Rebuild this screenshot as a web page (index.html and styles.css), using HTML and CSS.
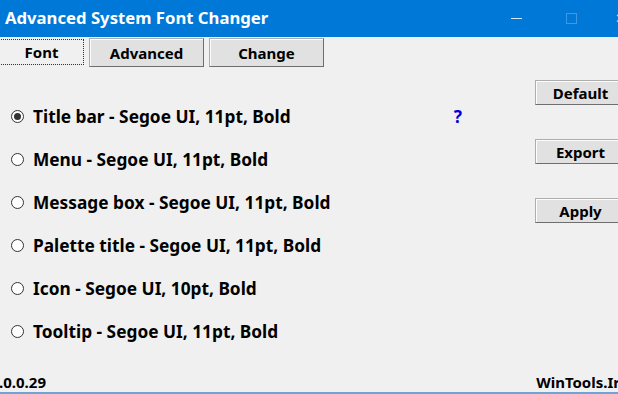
FILE: index.html
```html
<!DOCTYPE html>
<html>
<head>
  <title>Advanced System Font Changer</title>
  <link rel="stylesheet" href="styles.css">
</head>
<body>
  <div class="window">
    <div class="titlebar">
      <div class="title">Advanced System Font Changer</div>
      <div class="controls">
        <span class="ctl min"></span>
        <span class="ctl max"></span>
        <span class="ctl close">✕</span>
      </div>
    </div>

    <div class="tabs">
      <button class="tab active">Font</button>
      <button class="tab">Advanced</button>
      <button class="tab">Change</button>
    </div>

    <div class="content">
      <div class="options">
        <label class="option"><input type="radio" name="font" checked><span>Title bar - Segoe UI, 11pt, Bold</span><span class="help">?</span></label>
        <label class="option"><input type="radio" name="font"><span>Menu - Segoe UI, 11pt, Bold</span></label>
        <label class="option"><input type="radio" name="font"><span>Message box - Segoe UI, 11pt, Bold</span></label>
        <label class="option"><input type="radio" name="font"><span>Palette title - Segoe UI, 11pt, Bold</span></label>
        <label class="option"><input type="radio" name="font"><span>Icon - Segoe UI, 10pt, Bold</span></label>
        <label class="option"><input type="radio" name="font"><span>Tooltip - Segoe UI, 11pt, Bold</span></label>
      </div>
      <div class="actions">
        <button class="btn">Default</button>
        <button class="btn">Export</button>
        <button class="btn">Apply</button>
      </div>
    </div>

    <div class="footer">
      <span>.0.0.29</span>
      <span>WinTools.Ir</span>
    </div>
  </div>
</body>
</html>
```

FILE: styles.css
```css
body {
  margin: 0;
  background: #f0f0f0;
  font-family: "Noto Sans", "Open Sans", sans-serif;
  overflow: hidden;
}
.window {
  width: 618px;
  height: 394px;
  display: flex;
  flex-direction: column;
  border-bottom: 2px solid #6fa3d6;
  box-sizing: border-box;
}
.titlebar {
  height: 37px;
  background: #0078d7;
  display: flex;
  align-items: center;
  justify-content: space-between;
  flex-shrink: 0;
}
.title {
  color: #fff;
  font-weight: bold;
  font-size: 16.7px;
  padding-left: 5px;
  margin-top: -2px;
}
.controls {
  display: flex;
  align-items: center;
  margin-right: -8px;
}
.ctl {
  display: block;
}
.min {
  width: 11px;
  height: 1px;
  background: #d6e7f6;
  margin-right: 44px;
}
.max {
  width: 9px;
  height: 9px;
  border: 1px solid #3f98e0;
  margin-right: 38px;
}
.close {
  color: #d6e7f6;
  font-size: 13px;
  line-height: 13px;
}
.tabs {
  display: flex;
  gap: 5px;
  padding-top: 1px;
  height: 30px;
  flex-shrink: 0;
}
.tab, .btn {
  font-family: inherit;
  font-weight: bold;
  font-size: 15px;
  color: #000;
  background: #e1e1e1;
  border: 1px solid #adadad;
  border-right-color: #6e6e6e;
  border-bottom-color: #6e6e6e;
  box-shadow: inset 1px 1px 0 #fdfdfd;
  padding: 0;
  cursor: pointer;
}
.tab {
  width: 115px;
  height: 29px;
}
.tab.active {
  width: 85px;
  height: 26px;
  margin-top: 1px;
  margin-left: -1px;
  background: #f0f0f0;
  border: 1px dotted #333;
  box-shadow: none;
}
.content {
  flex: 1;
  display: flex;
  justify-content: space-between;
}
.options {
  padding-top: 27px;
  display: flex;
  flex-direction: column;
}
.option {
  height: 43px;
  display: flex;
  align-items: center;
  font-weight: bold;
  font-size: 17.3px;
  color: #000;
}
.option input {
  appearance: none;
  margin: 0 9px 0 11px;
  width: 13px;
  height: 13px;
  border: 1px solid #333;
  border-radius: 50%;
  background: #fff;
  box-sizing: border-box;
  display: flex;
  align-items: center;
  justify-content: center;
}
.option input:checked::after {
  content: "";
  width: 7px;
  height: 7px;
  border-radius: 50%;
  background: #333;
}
.help {
  color: #0000dd;
  margin-left: 163px;
}
.actions {
  display: flex;
  flex-direction: column;
  gap: 34px;
  padding-top: 12px;
  margin-right: -8px;
}
.btn {
  width: 91px;
  height: 25px;
}
.footer {
  display: flex;
  justify-content: space-between;
  align-items: flex-end;
  font-weight: bold;
  font-size: 15px;
  color: #000;
  height: 24px;
  margin-right: -2px;
  margin-left: -1px;
}
```
